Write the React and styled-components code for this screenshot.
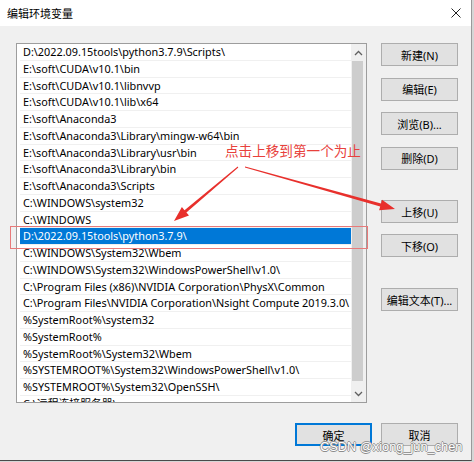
import React from 'react';
import styled, { createGlobalStyle } from 'styled-components';

const Global = createGlobalStyle`
  html, body { margin: 0; padding: 0; }
  body {
    width: 474px; height: 462px; overflow: hidden;
    font-family: "Noto Sans", "Noto Sans CJK SC", sans-serif;
    background: #dcdcdc;
  }
`;

const Screen = styled.div`
  width: 474px;
  height: 462px;
  background: #d6d6d6;
  overflow: hidden;
`;

const Window = styled.div`
  position: relative;
  width: 471px;
  height: 460px;
  border-right: 1px solid #9a9a9a;
  border-bottom: 1px solid #4a4a4a;
  display: flex;
  flex-direction: column;
  background: #f0f0f0;
`;

const TitleBar = styled.div`
  height: 26px;
  flex: none;
  background: #fff;
  display: flex;
  align-items: center;
  justify-content: space-between;
  padding: 0 10px 0 7px;
  font-size: 11px;
  color: #000;
`;

const Body = styled.div`
  flex: 1;
  padding: 17px 13px 0 16px;
  display: flex;
  flex-direction: column;
`;

const ContentRow = styled.div`
  display: flex;
  align-items: flex-start;
  gap: 14px;
`;

const ListBox = styled.div`
  width: 352px;
  height: 360px;
  box-sizing: border-box;
  border: 1px solid #9d9d9d;
  background: #fff;
  display: flex;
`;

const Rows = styled.div`
  flex: 1;
  overflow: hidden;
  padding-left: 3px;
`;

const Row = styled.div`
  height: 16.75px;
  box-sizing: border-box;
  border-bottom: 1px solid #f0f0f0;
  padding-left: 3px;
  line-height: 16px;
  font-size: 10.85px;
  white-space: nowrap;
  overflow: hidden;
  color: ${p => (p.$selected ? '#fff' : '#000')};
  background: ${p => (p.$selected ? '#0078d7' : 'transparent')};
`;

const Scrollbar = styled.div`
  width: 15px;
  flex: none;
  background: #f0f0f0;
  display: flex;
  flex-direction: column;
  align-items: center;
`;

const ScrollArrow = styled.div`
  height: 17px;
  width: 100%;
  flex: none;
  display: flex;
  align-items: center;
  justify-content: center;
`;

const Thumb = styled.div`
  flex: 1;
  width: 11px;
  margin: 0 3px 4px 1px;
  background: #cdcdcd;
`;

const ButtonColumn = styled.div`
  display: flex;
  flex-direction: column;
  width: 77px;
`;

const Button = styled.button`
  width: 77px;
  height: 23px;
  box-sizing: border-box;
  margin: ${p => p.$top || 0}px 0 0 0;
  padding: 0;
  border: 1px solid ${p => (p.$primary ? '#0078d7' : '#adadad')};
  box-shadow: ${p => (p.$primary ? 'inset 0 0 0 1px #0078d7' : 'none')};
  background: #e1e1e1;
  font-family: "Noto Sans", "Noto Sans CJK SC", sans-serif;
  font-size: 11px;
  color: #000;
  display: flex;
  align-items: center;
  justify-content: center;
`;

const Footer = styled.div`
  display: flex;
  justify-content: flex-end;
  gap: 9px;
  margin-top: 20px;
`;

const Highlight = styled.div`
  position: absolute;
  left: 10px;
  top: 226px;
  width: 358px;
  height: 23px;
  box-sizing: border-box;
  border: 1px solid #e87a7a;
`;

const Note = styled.div`
  position: absolute;
  left: 225px;
  top: 140px;
  font-size: 13.6px;
  color: #e8413c;
  white-space: nowrap;
  font-family: "Noto Sans CJK SC", sans-serif;
`;

const Overlay = styled.svg`
  position: absolute;
  left: 0;
  top: 0;
  pointer-events: none;
`;

const Watermark = styled.div`
  position: absolute;
  left: 320px;
  top: 439px;
  font-size: 12.8px;
  font-family: "Liberation Sans", Arial, sans-serif;
  color: #fff;
  white-space: nowrap;
  text-shadow: 0.7px 0 #8c8c8c, -0.7px 0 #8c8c8c, 0 0.7px #8c8c8c, 0 -0.7px #8c8c8c;
  pointer-events: none;
`;

const rows = [
  'D:\\2022.09.15tools\\python3.7.9\\Scripts\\',
  'E:\\soft\\CUDA\\v10.1\\bin',
  'E:\\soft\\CUDA\\v10.1\\libnvvp',
  'E:\\soft\\CUDA\\v10.1\\lib\\x64',
  'E:\\soft\\Anaconda3',
  'E:\\soft\\Anaconda3\\Library\\mingw-w64\\bin',
  'E:\\soft\\Anaconda3\\Library\\usr\\bin',
  'E:\\soft\\Anaconda3\\Library\\bin',
  'E:\\soft\\Anaconda3\\Scripts',
  'C:\\WINDOWS\\system32',
  'C:\\WINDOWS',
  'D:\\2022.09.15tools\\python3.7.9\\',
  'C:\\WINDOWS\\System32\\Wbem',
  'C:\\WINDOWS\\System32\\WindowsPowerShell\\v1.0\\',
  'C:\\Program Files (x86)\\NVIDIA Corporation\\PhysX\\Common',
  'C:\\Program Files\\NVIDIA Corporation\\Nsight Compute 2019.3.0\\',
  '%SystemRoot%\\system32',
  '%SystemRoot%',
  '%SystemRoot%\\System32\\Wbem',
  '%SYSTEMROOT%\\System32\\WindowsPowerShell\\v1.0\\',
  '%SYSTEMROOT%\\System32\\OpenSSH\\',
  'C:\\远程连接服务器\\',
];

function arrowPoints(x1, y1, x2, y2, w0, w1, headLen, headW) {
  const dx = x2 - x1, dy = y2 - y1;
  const len = Math.hypot(dx, dy);
  const ux = dx / len, uy = dy / len;
  const nx = -uy, ny = ux;
  const bx = x2 - ux * headLen, by = y2 - uy * headLen;
  const pts = [
    [x1 + nx * w0 / 2, y1 + ny * w0 / 2],
    [bx + nx * w1 / 2, by + ny * w1 / 2],
    [bx + nx * headW / 2, by + ny * headW / 2],
    [x2, y2],
    [bx - nx * headW / 2, by - ny * headW / 2],
    [bx - nx * w1 / 2, by - ny * w1 / 2],
    [x1 - nx * w0 / 2, y1 - ny * w0 / 2],
  ];
  return pts.map(p => p[0].toFixed(1) + ',' + p[1].toFixed(1)).join(' ');
}

const Up = () => (
  <svg width="9" height="6" viewBox="0 0 9 6">
    <path d="M1 5 L4.5 1.5 L8 5" fill="none" stroke="#606060" strokeWidth="1.3" />
  </svg>
);
const Down = () => (
  <svg width="9" height="6" viewBox="0 0 9 6">
    <path d="M1 1 L4.5 4.5 L8 1" fill="none" stroke="#606060" strokeWidth="1.3" />
  </svg>
);

export default function App() {
  return (
    <Screen>
      <Global />
      <Window>
        <TitleBar>
          <span>编辑环境变量</span>
          <svg width="10" height="10" viewBox="0 0 10 10">
            <path d="M0.5 0.5 L9.5 9.5 M9.5 0.5 L0.5 9.5" stroke="#222" strokeWidth="1" />
          </svg>
        </TitleBar>
        <Body>
          <ContentRow>
            <ListBox>
              <Rows>
                {rows.map((r, i) => (
                  <Row key={i} $selected={i === 11}>{r}</Row>
                ))}
              </Rows>
              <Scrollbar>
                <ScrollArrow><Up /></ScrollArrow>
                <Thumb />
                <ScrollArrow><Down /></ScrollArrow>
              </Scrollbar>
            </ListBox>
            <ButtonColumn>
              <Button>新建(N)</Button>
              <Button $top={11.5}>编辑(E)</Button>
              <Button $top={11.5}>浏览(B)...</Button>
              <Button $top={11.5}>删除(D)</Button>
              <Button $top={30.5}>上移(U)</Button>
              <Button $top={11}>下移(O)</Button>
              <Button $top={31}>编辑文本(T)...</Button>
            </ButtonColumn>
          </ContentRow>
          <Footer>
            <Button $primary>确定</Button>
            <Button>取消</Button>
          </Footer>
        </Body>
        <Highlight />
        <Note>点击上移到第一个为止</Note>
        <Overlay width="471" height="460" viewBox="0 0 471 460">
          <polygon points={arrowPoints(238, 167, 174, 221, 1, 3, 15, 11)} fill="#e8302c" />
          <polygon points={arrowPoints(245, 167, 395, 209, 1, 3, 15, 11)} fill="#e8302c" />
        </Overlay>
        <Watermark>CSDN @xiong_jun_chen</Watermark>
      </Window>
    </Screen>
  );
}
